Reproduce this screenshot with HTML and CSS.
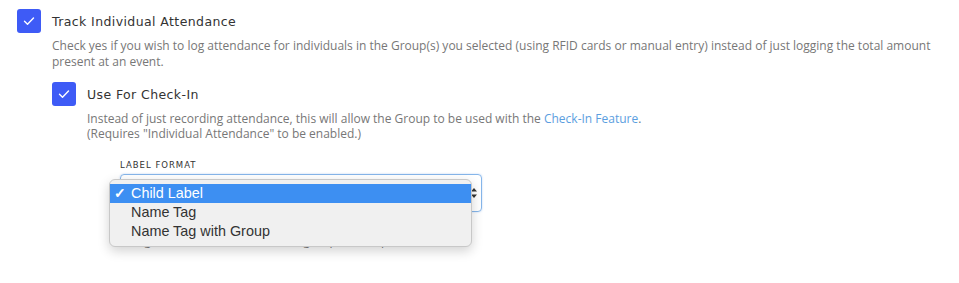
FILE: index.html
```html
<!DOCTYPE html>
<html lang="en">
<head>
    <meta charset="UTF-8">
    <title>Group Attendance Settings</title>
    <link rel="stylesheet" href="styles.css">
</head>
<body>
    <div class="settings">
        <div class="option">
            <div class="option-row">
                <span class="check">
                    <svg viewBox="0 0 24 24" width="24" height="24"><path d="M7.5 12.3l3 3 6-6.2" fill="none" stroke="#fff" stroke-width="1.4" stroke-linecap="round" stroke-linejoin="round"/></svg>
                </span>
                <span class="option-title">Track Individual Attendance</span>
            </div>
            <div class="option-help">Check yes if you wish to log attendance for individuals in the Group(s) you selected (using RFID cards or manual entry) instead of just logging the total amount present at an event.</div>

            <div class="option nested">
                <div class="option-row">
                    <span class="check">
                        <svg viewBox="0 0 24 24" width="24" height="24"><path d="M7.5 12.3l3 3 6-6.2" fill="none" stroke="#fff" stroke-width="1.4" stroke-linecap="round" stroke-linejoin="round"/></svg>
                    </span>
                    <span class="option-title">Use For Check-In</span>
                </div>
                <div class="option-help">Instead of just recording attendance, this will allow the Group to be used with the <a href="#">Check-In Feature</a>.<br>(Requires "Individual Attendance" to be enabled.)</div>

                <div class="form-group">
                    <label class="form-label">Label Format</label>
                    <div class="select-wrap">
                        <div class="select-box">
                            <svg class="select-arrows" viewBox="0 0 8 14" width="8" height="14"><path d="M1 5.5L4 2l3 3.5zM1 8.5L4 12l3-3.5z" fill="#333"/></svg>
                        </div>
                        <ul class="select-menu">
                            <li class="selected"><span class="tick">✓</span>Child Label</li>
                            <li>Name Tag</li>
                            <li>Name Tag with Group</li>
                        </ul>
                    </div>
                    <div class="form-help">Designates the kind of label that gets printed upon check-in.</div>
                </div>
            </div>
        </div>
    </div>
</body>
</html>
```

FILE: styles.css
```css
body {
    margin: 0;
    background: #fff;
    font-family: "Open Sans", Arial, sans-serif;
    color: #333;
}

.settings {
    padding: 9px 20px 20px 17px;
}

.option-row {
    display: flex;
    align-items: center;
    gap: 11px;
    height: 24px;
}

.check {
    width: 24px;
    height: 24px;
    border-radius: 3px;
    background: #3e5bf6;
    display: flex;
}

.option-title {
    font-family: "DejaVu Sans", sans-serif;
    font-size: 12.5px;
    letter-spacing: 0.4px;
    color: #333;
}

.option-help {
    margin: 5px 0 0 35px;
    font-size: 12px;
    line-height: 16px;
    color: #777;
}

.option-help a {
    color: #5b9ee0;
    text-decoration: none;
}

.nested {
    margin: 12px 0 0 35px;
}

.nested .option-help {
    line-height: 15px;
}

.form-group {
    margin: 19px 0 0 68px;
    width: 362px;
}

.form-label {
    display: block;
    font-family: "DejaVu Sans", sans-serif;
    font-size: 8.5px;
    letter-spacing: 1px;
    text-transform: uppercase;
    color: #333;
    margin-bottom: 4px;
}

.select-wrap {
    position: relative;
}

.select-box {
    height: 36px;
    border: 1px solid #86b6ea;
    border-radius: 4px;
    box-shadow: 0 0 2px rgba(90, 150, 230, 0.4);
    display: flex;
    align-items: center;
    justify-content: flex-end;
    padding-right: 3px;
}

.select-menu {
    position: absolute;
    z-index: 10;
    left: -11px;
    top: 5px;
    width: 361px;
    margin: 0;
    padding: 4px 0 5px;
    list-style: none;
    background: #f0f0f0;
    border: 1px solid #c8c8c8;
    border-radius: 6px;
    box-shadow: 0 4px 12px rgba(0, 0, 0, 0.18);
    font-family: "Liberation Sans", Arial, sans-serif;
    font-size: 14.4px;
    color: #333;
}

.select-menu li {
    height: 19px;
    line-height: 19px;
    padding-left: 21px;
    position: relative;
}

.select-menu li.selected {
    background: #3d8ff2;
    color: #fff;
}

.tick {
    position: absolute;
    left: 4px;
    font-weight: bold;
}

.form-help {
    margin-top: 20px;
    font-size: 12px;
    color: #777;
}
```
